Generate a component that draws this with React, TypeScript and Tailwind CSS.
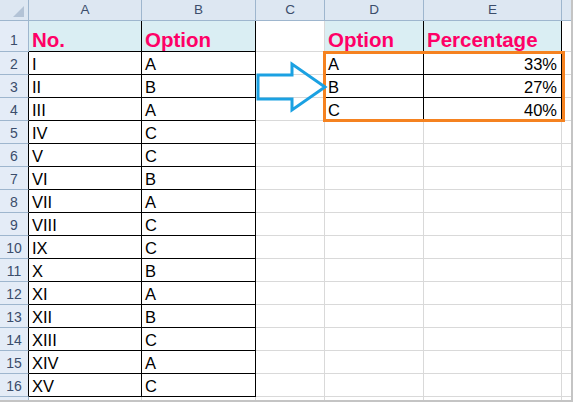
import React from "react";

const rows: [string, string][] = [
  ["I", "A"],
  ["II", "B"],
  ["III", "A"],
  ["IV", "C"],
  ["V", "C"],
  ["VI", "B"],
  ["VII", "A"],
  ["VIII", "C"],
  ["IX", "C"],
  ["X", "B"],
  ["XI", "A"],
  ["XII", "B"],
  ["XIII", "C"],
  ["XIV", "A"],
  ["XV", "C"],
];

const summary: [string, string][] = [
  ["A", "33%"],
  ["B", "27%"],
  ["C", "40%"],
];

const font = { fontFamily: '"Liberation Sans", Arial, sans-serif' };

export default function App() {
  return (
    <div className="w-[573px] h-[402px] bg-[#c4c4c4]" style={font}>
      <div className="relative w-[571px] h-[400px] bg-white overflow-hidden">
        <div className="grid grid-cols-[29px_113px_114px_69px_99px_138px_1fr] grid-rows-[21px_31px_repeat(15,23px)_1fr] h-full">
          {/* column headers */}
          <div className="relative bg-[#dde7f2] border-r border-b border-[#9eb6ce]">
            <svg className="absolute left-[13px] top-[6px]" width="11" height="11" viewBox="0 0 11 11">
              <polygon points="11,0 11,11 0,11" fill="#b3c3d6" />
            </svg>
          </div>
          {["A", "B", "C", "D", "E", ""].map((c, i) => (
            <div
              key={"h" + i}
              className={`flex items-center justify-center bg-[#dde7f2] border-b border-[#9eb6ce] text-[13.5px] text-[#3b4d6b] ${i < 5 ? "border-r" : ""}`}
            >
              {c}
            </div>
          ))}

          {/* row 1 */}
          <div className="flex items-end justify-center pb-[4px] bg-[#e4ecf7] border-r border-b border-[#9eb6ce] text-[14px] text-[#3b4d6b] leading-none">1</div>
          <div className="flex items-end pl-[3px] pb-[1px] bg-[#daeef3] border-r border-b border-black text-[20.5px] font-bold text-[#ff0066] leading-none">No.</div>
          <div className="flex items-end pl-[3px] pb-[1px] bg-[#daeef3] border-r border-b border-black text-[20.5px] font-bold text-[#ff0066] leading-none">Option</div>
          <div className="border-r border-b border-[#d9d9d9]" />
          <div className="flex items-end pl-[3px] pb-[1px] bg-[#daeef3] border-r border-b border-black text-[20.5px] font-bold text-[#ff0066] leading-none">Option</div>
          <div className="flex items-end pl-[3px] pb-[1px] bg-[#daeef3] border-r border-b border-black text-[20.5px] font-bold text-[#ff0066] leading-none">Percentage</div>
          <div className="border-b border-[#d9d9d9]" />

          {/* data rows */}
          {rows.map(([no, opt], i) => {
            const s = summary[i];
            const boxed = i < 3;
            return (
              <React.Fragment key={no}>
                <div className="flex items-end justify-center pb-[3px] bg-[#e4ecf7] border-r border-b border-r-black border-b-[#9eb6ce] text-[14px] text-[#3b4d6b] leading-none">
                  {i + 2}
                </div>
                <div className="flex items-end pl-[3px] pb-[2px] border-r border-b border-black text-[16.5px] text-black leading-none">{no}</div>
                <div className="flex items-end pl-[3px] pb-[2px] border-r border-b border-black text-[16.5px] text-black leading-none">{opt}</div>
                <div className="border-r border-b border-[#d9d9d9]" />
                <div className={`flex items-end pl-[3px] pb-[2px] border-r border-b text-[16.5px] text-black leading-none ${boxed ? "border-black" : "border-[#d9d9d9]"}`}>
                  {s ? s[0] : ""}
                </div>
                <div className={`flex items-end justify-end pr-[4px] pb-[2px] border-r border-b text-[16.5px] text-black leading-none ${boxed ? "border-black" : "border-[#d9d9d9]"}`}>
                  {s ? s[1] : ""}
                </div>
                <div className="border-b border-[#d9d9d9]" />
              </React.Fragment>
            );
          })}
          <div className="bg-[#e4ecf7] border-r border-[#9eb6ce]" />
          <div className="border-r border-[#d9d9d9]" />
          <div className="border-r border-[#d9d9d9]" />
          <div className="border-r border-[#d9d9d9]" />
          <div className="border-r border-[#d9d9d9]" />
          <div className="border-r border-[#d9d9d9]" />
          <div />
        </div>

        {/* orange selection box */}
        <div className="absolute left-[323px] top-[51px] w-[242px] h-[71px] border-[3px] border-[#f58220] pointer-events-none" />

        {/* arrow */}
        <svg className="absolute left-[254px] top-[60px]" width="76" height="54" viewBox="0 0 76 54">
          <polygon
            points="4,15 38,15 38,4 71,27 38,50 38,39 4,39"
            fill="none"
            stroke="#1ba1e2"
            strokeWidth="3"
            strokeLinejoin="miter"
          />
        </svg>
      </div>
    </div>
  );
}
